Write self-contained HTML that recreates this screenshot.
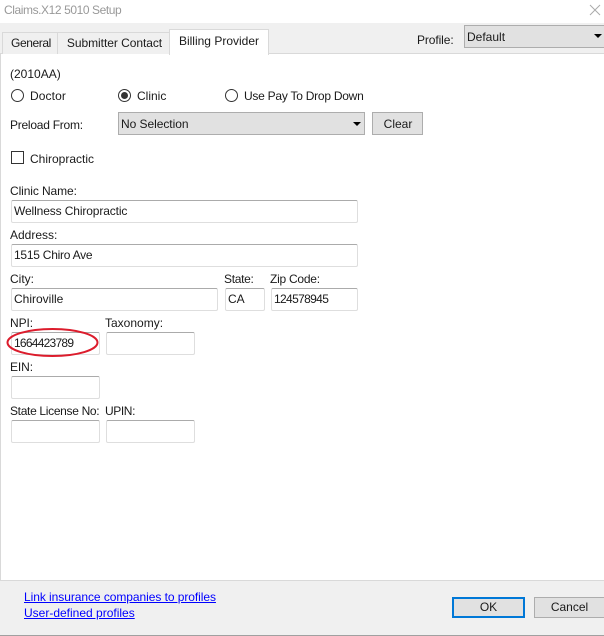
<!DOCTYPE html>
<html><head><meta charset="utf-8">
<style>
html,body{margin:0;padding:0;background:#fff}
#r{position:relative;width:604px;height:636px;overflow:hidden;background:#fff;font-family:"Liberation Sans",sans-serif;font-size:12px;color:#1a1a1a}
#r div{position:absolute;box-sizing:border-box}
.t{white-space:nowrap;line-height:14px;height:14px}
.f{height:23px;border:1px solid #dedede;border-top-color:#ababab;border-radius:2px;background:#fff;line-height:21px;padding-left:2px;white-space:nowrap}
.c{background:#e1e1e1;border:1px solid #adadad;line-height:22px;padding-left:2px;white-space:nowrap}
.a{width:0;height:0;border-left:4px solid transparent;border-right:4px solid transparent;border-top:4px solid #000}
.o{width:13px;height:13px;border:1px solid #333;border-radius:50%;background:#fff}
.tab{border:1px solid #d9d9d9;border-bottom:0;background:#f0f0f0;text-align:center;white-space:nowrap}
a{color:#0000ff;text-decoration:underline}
</style></head><body>
<div id="r">
<div class="t" style="left:4px;top:3px;color:#999;letter-spacing:-.42px">Claims.X12 5010 Setup</div>
<svg style="position:absolute;left:589px;top:4px" width="12" height="12"><path d="M1 1L11 11M11 1L1 11" stroke="#aaa" stroke-width="1" fill="none"/></svg>

<div style="left:0;top:23px;width:604px;height:31px;background:#f0f0f0;border-bottom:1px solid #d9d9d9"></div>
<div style="left:0;top:54px;width:1px;height:527px;background:#d9d9d9"></div>
<div class="tab" style="left:2px;top:32px;width:56px;height:22px;line-height:21px;letter-spacing:-.4px;padding-left:2px">General</div>
<div class="tab" style="left:57px;top:32px;width:113px;height:22px;line-height:21px;letter-spacing:-.05px;padding-left:2px">Submitter Contact</div>
<div class="tab" style="left:169px;top:29px;width:100px;height:26px;line-height:23px;background:#fff">Billing Provider</div>
<div class="t" style="left:417px;top:33px;letter-spacing:-.1px">Profile:</div>
<div class="c" style="left:464px;top:25px;width:141px;height:23px;line-height:22px">Default</div>
<div class="a" style="left:594px;top:34px"></div>

<div class="t" style="left:10px;top:67px">(2010AA)</div>
<div class="o" style="left:11px;top:89px"></div>
<div class="t" style="left:30px;top:89px;letter-spacing:.1px">Doctor</div>
<div class="o" style="left:118px;top:89px"></div>
<div style="left:121px;top:92px;width:7px;height:7px;border-radius:50%;background:#333"></div>
<div class="t" style="left:137px;top:89px">Clinic</div>
<div class="o" style="left:225px;top:89px"></div>
<div class="t" style="left:244px;top:89px;letter-spacing:-.25px">Use Pay To Drop Down</div>

<div class="t" style="left:10px;top:118px;letter-spacing:-.25px">Preload From:</div>
<div class="c" style="left:118px;top:112px;width:247px;height:23px;letter-spacing:-.05px">No Selection</div>
<div class="a" style="left:353px;top:122px"></div>
<div class="c" style="left:372px;top:112px;width:51px;height:23px;padding:0 0 0 1px;text-align:center">Clear</div>

<div style="left:11px;top:151px;width:13px;height:13px;border:1px solid #333;background:#fff"></div>
<div class="t" style="left:30px;top:152px">Chiropractic</div>

<div class="t" style="left:10px;top:184px;letter-spacing:-.1px">Clinic Name:</div>
<div class="f" style="left:11px;top:200px;width:347px;letter-spacing:-.12px">Wellness Chiropractic</div>
<div class="t" style="left:10px;top:228px">Address:</div>
<div class="f" style="left:11px;top:244px;width:347px;letter-spacing:-.25px">1515 Chiro Ave</div>
<div class="t" style="left:10px;top:272px">City:</div>
<div class="t" style="left:224px;top:272px;letter-spacing:-.3px">State:</div>
<div class="t" style="left:270px;top:272px;letter-spacing:-.25px">Zip Code:</div>
<div class="f" style="left:11px;top:288px;width:207px">Chiroville</div>
<div class="f" style="left:225px;top:288px;width:40px">CA</div>
<div class="f" style="left:271px;top:288px;width:87px;letter-spacing:-.65px">124578945</div>
<div class="t" style="left:10px;top:316px;letter-spacing:-.1px">NPI:</div>
<div class="t" style="left:105px;top:316px">Taxonomy:</div>
<div class="f" style="left:11px;top:332px;width:89px;letter-spacing:-.75px">1664423789</div>
<div class="f" style="left:106px;top:332px;width:89px"></div>
<div class="t" style="left:10px;top:360px;letter-spacing:-.1px">EIN:</div>
<div class="f" style="left:11px;top:376px;width:89px"></div>
<div class="t" style="left:10px;top:404px;letter-spacing:-.32px">State License No:</div>
<div class="t" style="left:105px;top:404px;letter-spacing:-.4px">UPIN:</div>
<div class="f" style="left:11px;top:420px;width:89px"></div>
<div class="f" style="left:106px;top:420px;width:89px"></div>

<svg style="position:absolute;left:0;top:320px" width="110" height="45"><ellipse cx="52.5" cy="22.5" rx="45" ry="13.5" fill="none" stroke="#dc1c2c" stroke-width="2"/></svg>

<div style="left:0;top:580px;width:604px;height:56px;background:#f0f0f0;border-top:1px solid #d9d9d9;border-bottom:1px solid #a0a0a0"></div>
<div class="t" style="left:24px;top:590px;letter-spacing:-.06px"><a>Link insurance companies to profiles</a></div>
<div class="t" style="left:24px;top:606px"><a>User-defined profiles</a></div>
<div class="c" style="left:452px;top:597px;width:73px;height:21px;border:2px solid #0078d7;padding:0;text-align:center;line-height:17px">OK</div>
<div class="c" style="left:534px;top:597px;width:71px;height:21px;padding:0;text-align:center;line-height:19px">Cancel</div>
</div>
</body></html>
